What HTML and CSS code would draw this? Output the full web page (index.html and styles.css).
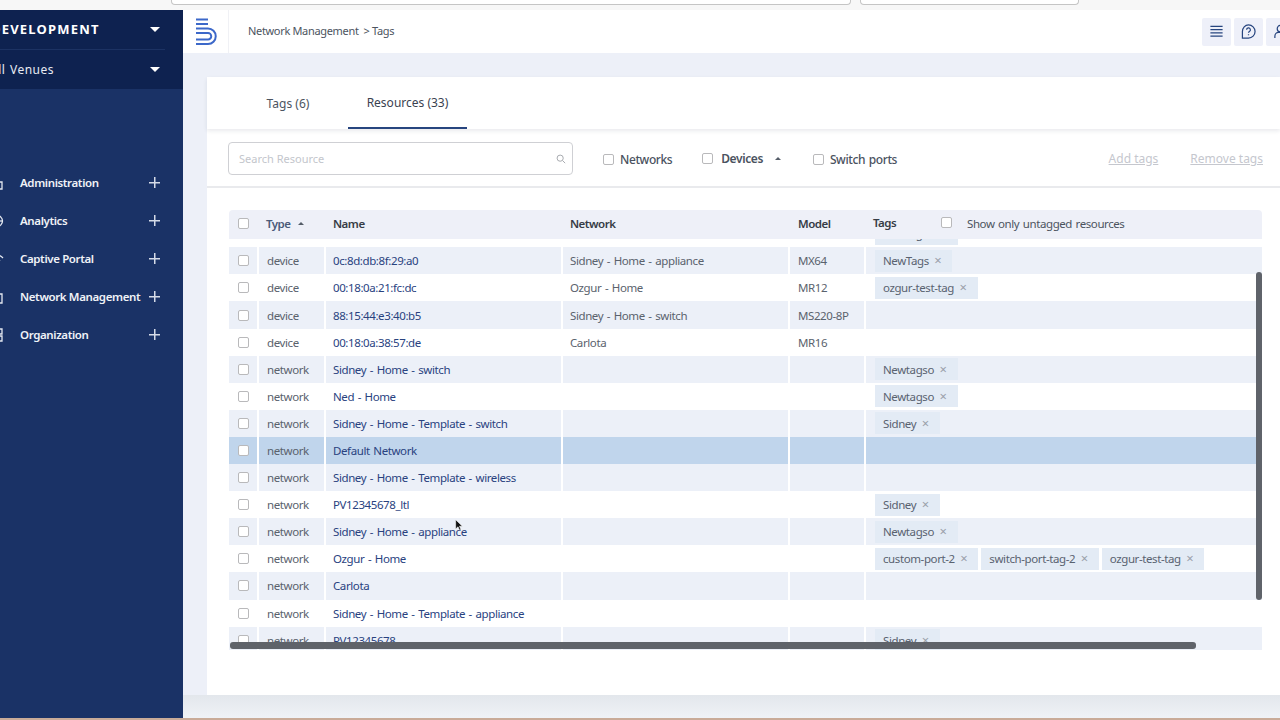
FILE: index.html
```html
<!DOCTYPE html>
<html lang="en">
<head>
<meta charset="utf-8">
<title>Network Management - Tags</title>
<link rel="stylesheet" href="styles.css">
</head>
<body>
<div class="browser"><span class="url url-a"></span><span class="url url-b"></span></div>
<div class="app">
  <aside class="sidebar">
    <div class="side-top">
      <div class="org"><span class="org-name">DEVELOPMENT</span><span class="caret"></span></div>
      <div class="venue"><span class="venue-name">All Venues</span><span class="caret"></span></div>
    </div>
    <nav class="nav">
      <div class="nav-item"><svg class="nav-icon" viewBox="0 0 14 14"><path d="M2 6h10v7H2zM5 6V2h4v4"/></svg><span class="nav-label">Administration</span><span class="plus"></span></div>
      <div class="nav-item"><svg class="nav-icon" viewBox="0 0 14 14"><circle cx="7" cy="7" r="5.5"/><path d="M1.5 7h11"/></svg><span class="nav-label">Analytics</span><span class="plus"></span></div>
      <div class="nav-item"><svg class="nav-icon" viewBox="0 0 14 14"><path d="M1 6c4-4 8-4 12 0M4 9c2-2 4-2 6 0"/></svg><span class="nav-label">Captive Portal</span><span class="plus"></span></div>
      <div class="nav-item"><svg class="nav-icon" viewBox="0 0 14 14"><path d="M2 4h10v9H2zM9 1v3"/></svg><span class="nav-label">Network Management</span><span class="plus"></span></div>
      <div class="nav-item"><svg class="nav-icon" viewBox="0 0 14 14"><path d="M2 1h10v5H2zM2 8h10v5H2z"/></svg><span class="nav-label">Organization</span><span class="plus"></span></div>
    </nav>
  </aside>
  <main class="main">
    <header class="topbar">
      <div class="logo-box">
        <svg class="logo" viewBox="0 0 22 28"><path d="M1 1.500h12M1 6h12M1 10.500h12a7.500 7.500 0 0 1 0 15.500H1M1 15h12a3 3 0 0 1 0 6.500H1"/></svg>
      </div>
      <div class="crumbs">Network Management &nbsp;&gt;&nbsp;Tags</div>
      <div class="top-actions">
        <span class="top-btn"><svg class="top-icon" viewBox="0 0 16 16"><path d="M1.500 2.500h13M1.500 6h13M1.500 9.500h13M1.500 13h13"/></svg></span>
        <span class="top-btn"><svg class="top-icon thin" viewBox="0 0 16 16"><path d="M8 1a7 7 0 1 1 0 14H1.500V8A6.500 7 0 0 1 8 1z"/><path d="M6 6.200a2 2 0 1 1 3 1.700c-.7.400-1 .8-1 1.500M8 11v1"/></svg></span>
        <span class="top-btn"><svg class="top-icon thin" viewBox="0 0 16 16"><circle cx="8" cy="5" r="3.500"/><path d="M2 15v-2a4 4 0 0 1 4-4h4"/></svg></span>
      </div>
    </header>
    <div class="content">
      <section class="card">
        <div class="tabs">
          <div class="tab">Tags (6)</div>
          <div class="tab tab-active">Resources (33)</div>
        </div>
        <div class="toolbar">
          <div class="search"><span class="search-text">Search Resource</span><svg class="search-icon" viewBox="0 0 12 12"><circle cx="5" cy="5" r="3.700"/><path d="M8 8l3 3"/></svg></div>
          <label class="check-label lab-net"><span class="box"></span>Networks</label>
          <label class="check-label lab-dev"><span class="box"></span><b class="dev-text">Devices</b><span class="sort-up"></span></label>
          <label class="check-label lab-sw"><span class="box"></span>Switch ports</label>
          <div class="actions"><span class="act">Add tags</span><span class="act">Remove tags</span></div>
        </div>
        <div class="table-wrap">
          <div class="table-head">
            <div class="hcell"><span class="box"></span></div>
            <div class="hcell h-type">Type<span class="sort-up"></span></div>
            <div class="hcell">Name</div>
            <div class="hcell">Network</div>
            <div class="hcell h-model">Model</div>
            <div class="hcell h-tags"><span class="h-tags-label">Tags</span><span class="box"></span><span class="untagged">Show only untagged resources</span></div>
          </div>
          <div class="table-body">
            <div class="rows">
              <div class="row"><div class="c"><span class="box"></span></div><div class="c">device</div><div class="c link">0c:8d:db:8f:29:a1</div><div class="c"></div><div class="c"></div><div class="c tags"><span class="tag">Newtagso <i>×</i></span></div></div>
              <div class="row alt"><div class="c"><span class="box"></span></div><div class="c">device</div><div class="c link">0c:8d:db:8f:29:a0</div><div class="c">Sidney - Home - appliance</div><div class="c">MX64</div><div class="c tags"><span class="tag">NewTags <i>×</i></span></div></div>
              <div class="row"><div class="c"><span class="box"></span></div><div class="c">device</div><div class="c link">00:18:0a:21:fc:dc</div><div class="c">Ozgur - Home</div><div class="c">MR12</div><div class="c tags"><span class="tag">ozgur-test-tag <i>×</i></span></div></div>
              <div class="row alt"><div class="c"><span class="box"></span></div><div class="c">device</div><div class="c link">88:15:44:e3:40:b5</div><div class="c">Sidney - Home - switch</div><div class="c">MS220-8P</div><div class="c tags"></div></div>
              <div class="row"><div class="c"><span class="box"></span></div><div class="c">device</div><div class="c link">00:18:0a:38:57:de</div><div class="c">Carlota</div><div class="c">MR16</div><div class="c tags"></div></div>
              <div class="row alt"><div class="c"><span class="box"></span></div><div class="c">network</div><div class="c link">Sidney - Home - switch</div><div class="c"></div><div class="c"></div><div class="c tags"><span class="tag">Newtagso <i>×</i></span></div></div>
              <div class="row"><div class="c"><span class="box"></span></div><div class="c">network</div><div class="c link">Ned - Home</div><div class="c"></div><div class="c"></div><div class="c tags"><span class="tag">Newtagso <i>×</i></span></div></div>
              <div class="row alt"><div class="c"><span class="box"></span></div><div class="c">network</div><div class="c link">Sidney - Home - Template - switch</div><div class="c"></div><div class="c"></div><div class="c tags"><span class="tag">Sidney <i>×</i></span></div></div>
              <div class="row sel"><div class="c"><span class="box"></span></div><div class="c">network</div><div class="c link">Default Network</div><div class="c"></div><div class="c"></div><div class="c tags"></div></div>
              <div class="row alt"><div class="c"><span class="box"></span></div><div class="c">network</div><div class="c link">Sidney - Home - Template - wireless</div><div class="c"></div><div class="c"></div><div class="c tags"></div></div>
              <div class="row"><div class="c"><span class="box"></span></div><div class="c">network</div><div class="c link">PV12345678_ltl</div><div class="c"></div><div class="c"></div><div class="c tags"><span class="tag">Sidney <i>×</i></span></div></div>
              <div class="row alt"><div class="c"><span class="box"></span></div><div class="c">network</div><div class="c link">Sidney - Home - appliance</div><div class="c"></div><div class="c"></div><div class="c tags"><span class="tag">Newtagso <i>×</i></span></div></div>
              <div class="row"><div class="c"><span class="box"></span></div><div class="c">network</div><div class="c link">Ozgur - Home</div><div class="c"></div><div class="c"></div><div class="c tags"><span class="tag">custom-port-2 <i>×</i></span><span class="tag">switch-port-tag-2 <i>×</i></span><span class="tag">ozgur-test-tag <i>×</i></span></div></div>
              <div class="row alt"><div class="c"><span class="box"></span></div><div class="c">network</div><div class="c link">Carlota</div><div class="c"></div><div class="c"></div><div class="c tags"></div></div>
              <div class="row"><div class="c"><span class="box"></span></div><div class="c">network</div><div class="c link">Sidney - Home - Template - appliance</div><div class="c"></div><div class="c"></div><div class="c tags"></div></div>
              <div class="row alt"><div class="c"><span class="box"></span></div><div class="c">network</div><div class="c link">PV12345678</div><div class="c"></div><div class="c"></div><div class="c tags"><span class="tag">Sidney <i>×</i></span></div></div>
            </div>
            <div class="scroll-v"></div>
            <div class="scroll-h"></div>
            <svg class="cursor" viewBox="0 0 12 18"><path d="M1 1v14l3.500-3.300 2.300 5 2.200-1-2.300-4.900H11z"/></svg>
          </div>
        </div>
      </section>
      <div class="foot"></div>
    </div>
  </main>
</div>
<div class="tan"></div>
</body>
</html>
```

FILE: styles.css
```css
* { box-sizing: border-box; }
html, body { margin: 0; height: 720px; overflow: hidden; }
body {
  font-family: "Noto Sans", "Open Sans", sans-serif;
  font-size: 11.5px;
  letter-spacing: -.4px;
  word-spacing: 1px;
  color: #5a626d;
  background: #fff;
  display: flex;
  flex-direction: column;
}
.browser {
  height: 10px;
  flex: none;
  background: #f7f7f7;
  display: flex;
  padding-left: 171px;
  gap: 9px;
}
.url { height: 5px; background: #fff; border: 1px solid #c5c5c5; border-top: 0; border-radius: 0 0 4px 4px; }
.url-a { width: 680px; }
.url-b { width: 219px; }
.app { flex: 1; display: flex; min-height: 0; }
.tan { height: 2px; flex: none; background: #c9ab98; }

.sidebar { width: 183px; flex: none; background: #1a3266; color: #fff; overflow: hidden; }
.side-top { background: #0e2250; height: 79px; padding-right: 18px; }
.org, .venue { height: 39.500px; display: flex; align-items: center; justify-content: space-between; }
.org { border-bottom: 1px solid #1c3263; }
.org-name { font-weight: 700; font-size: 13px; letter-spacing: 1.200px; margin-left: -9px; }
.venue-name { font-size: 12px; letter-spacing: .5px; margin-left: -10px; color: #e8ebf2; }
.caret { width: 0; height: 0; border-left: 5px solid transparent; border-right: 5px solid transparent; border-top: 5px solid #fff; margin-right: 5px; }
.nav { padding-top: 75px; }
.nav-item { height: 38px; display: flex; align-items: center; padding-right: 23px; padding-bottom: 1px; }
.nav-icon { width: 14px; height: 14px; flex: none; margin-left: -10px; margin-right: 16px; fill: none; stroke: #e4e8f0; stroke-width: 1.300; }
.nav-label { font-weight: 600; font-size: 11.500px; letter-spacing: -.38px; word-spacing: 0; flex: 1; color: #f0f2f7; white-space: nowrap; }
.plus { width: 11px; height: 11px; flex: none; background: linear-gradient(#d5dbe8, #d5dbe8) center/11px 1.500px no-repeat, linear-gradient(#d5dbe8, #d5dbe8) center/1.500px 11px no-repeat; }

.main { flex: 1; min-width: 0; display: flex; flex-direction: column; background: #edf0f8; }
.topbar { height: 43px; flex: none; background: #fff; display: flex; align-items: center; }
.logo-box { width: 46px; height: 43px; border-right: 1px solid #f0f1f5; display: flex; align-items: center; padding-left: 11.500px; flex: none; }
.logo { width: 22px; height: 28px; fill: none; stroke: #3c68c9; stroke-width: 2; }
.crumbs { margin-left: 19px; flex: 1; color: #4c5460; font-size: 11px; letter-spacing: -.33px; word-spacing: 0; padding-bottom: 2px; }
.top-actions { display: flex; gap: 3px; margin-right: -15px; }
.top-btn { width: 29px; height: 28px; background: #eef0f9; border-radius: 2px; display: flex; align-items: center; justify-content: center; }
.top-icon { width: 15px; height: 15px; fill: none; stroke: #27457f; stroke-width: 1.300; }

.content { flex: 1; padding: 24px 0 0 24px; display: flex; flex-direction: column; min-height: 0; }
.card { height: 618px; flex: none; background: #fff; display: flex; flex-direction: column; }
.foot { flex: 1; margin-left: -24px; background: linear-gradient(#e3e7ec, #eff2f6); }

.tabs { height: 52px; flex: none; display: flex; box-shadow: 0 2px 4px rgba(40, 50, 80, .1); padding-left: 33px; letter-spacing: 0; word-spacing: 0; }
.tab { width: 96px; display: flex; align-items: center; justify-content: center; font-size: 12px; color: #4c5460; }
.tab-active { width: 119px; margin-left: 12px; border-bottom: 2px solid #27457f; color: #3a4250; }
.toolbar { height: 59px; flex: none; display: flex; align-items: center; border-bottom: 2px solid #e9eaed; padding-left: 21px; }
.search { width: 345px; height: 33px; border: 1px solid #cfd0d4; border-radius: 4px; display: flex; align-items: center; justify-content: space-between; padding: 0 6px 0 10px; margin-top: 2px; flex: none; }
.search-text { color: #c3c6cc; font-size: 11px; letter-spacing: 0; word-spacing: 0; }
.search-icon { width: 10px; height: 10px; fill: none; stroke: #a8abb0; stroke-width: 1.200; }
.box { display: inline-block; width: 11px; height: 11px; border: 1.500px solid #b9b9bb; border-radius: 2px; background: #fff; flex: none; }
.check-label { display: flex; align-items: center; gap: 6px; font-weight: 500; color: #4a5260; font-size: 12px; }
.lab-net { margin-left: 30px; margin-top: 3px; }
.lab-dev { margin-left: 30px; margin-top: 1px; gap: 8px; }
.lab-sw { margin-left: 32px; margin-top: 3px; }
.dev-text { font-weight: 600; }
.sort-up { display: inline-block; width: 0; height: 0; border-left: 3px solid transparent; border-right: 3px solid transparent; border-bottom: 3px solid #555d68; margin-left: 7px; }
.lab-dev .sort-up { margin-left: 4px; }
.actions { margin-left: auto; display: flex; gap: 32px; margin-right: 17px; margin-top: 2px; }
.act { color: #c5c7ce; text-decoration: underline; font-size: 12px; letter-spacing: 0; word-spacing: 0; }

.table-wrap { margin: 22px 18px 0 22px; width: 1033px; }
.table-head, .row { display: grid; grid-template-columns: 28px 65px 235px 225px 74px 396px; column-gap: 2px; }
.table-head { height: 29px; background: #eef0f8; border-radius: 4px 4px 0 0; color: #363c46; font-weight: 600; letter-spacing: -.5px; }
.hcell { display: flex; align-items: center; padding-left: 7px; padding-bottom: 2px; }
.hcell:first-child { padding-left: 9px; padding-bottom: 3px; }
.h-type { padding-left: 7px; color: #4a5a78; }
.h-model { padding-left: 8px; }
.h-tags { padding-left: 7px; padding-bottom: 4px; }
.h-tags-label { width: 68px; }
.untagged { font-weight: 400; margin-left: 15px; color: #4c5460; padding-top: 2px; letter-spacing: -.42px; }
.table-body { height: 411px; overflow: hidden; position: relative; }
.rows { margin-top: -18.800px; }
.row { height: 27.100px; }
.c { display: flex; align-items: center; padding-left: 7px; white-space: nowrap; overflow: hidden; }
.c:first-child { padding-left: 9px; }
.c:nth-child(2) { padding-left: 8px; }
.c:nth-child(5) { padding-left: 8px; }
.alt .c { background: #ecf0f8; }
.sel .c { background: #c0d5ec; }
.link { color: #29427f; }
.tags { padding-left: 9px; gap: 3px; }
.tag { background: #e3ebf5; height: 22px; padding: 0 10px 0 8px; display: flex; align-items: center; white-space: pre; color: #596270; }
.tag i { font-style: normal; font-size: 13px; color: #9aa0aa; margin-left: 2px; margin-right: 1px; line-height: 1; }
.scroll-v { position: absolute; right: 0; top: 33px; width: 6px; height: 328px; background: #5f636a; border-radius: 3px; }
.scroll-h { position: absolute; left: 1px; top: 403px; width: 966px; height: 7px; background: #5f636a; border-radius: 3px; }
.cursor { position: absolute; left: 226px; top: 279px; width: 8px; height: 14px; fill: #111; stroke: #fff; stroke-width: .8; }
```
